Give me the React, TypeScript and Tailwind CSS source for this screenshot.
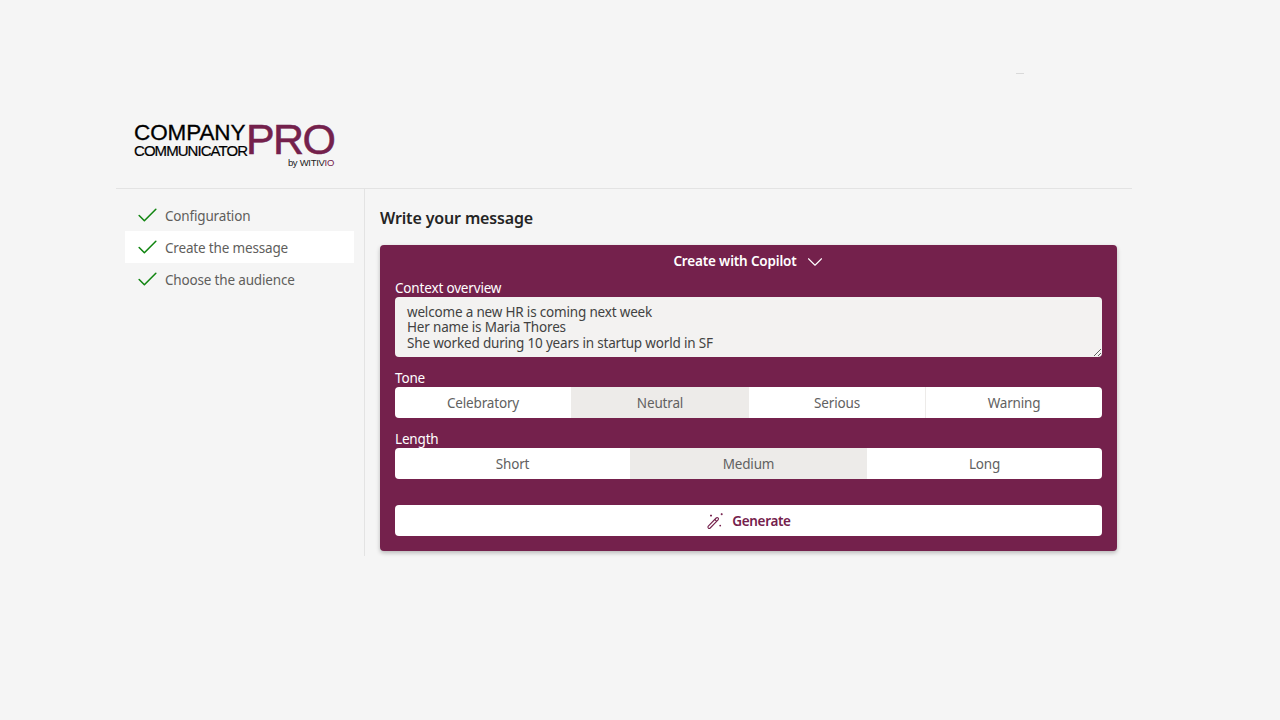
import { Check, ChevronDown } from "lucide-react";

const steps = ["Configuration", "Create the message", "Choose the audience"];

function Logo() {
  return (
    <div className="flex h-[50px] w-[202px] items-start font-['Liberation_Sans',Arial,sans-serif]">
      <div className="flex w-[112px] flex-col pt-[4px] text-black">
        <span className="whitespace-nowrap text-[22.5px] leading-[18px] tracking-[-0.1px] [-webkit-text-stroke:0.3px_#000]">COMPANY</span>
        <span className="mt-[2px] whitespace-nowrap text-[15px] leading-[14px] tracking-[-0.95px] [-webkit-text-stroke:0.2px_#000]">COMMUNICATOR</span>
      </div>
      <div className="flex w-[88px] flex-col items-end text-[#74214c]">
        <span className="w-full text-[43px] leading-[38px] tracking-[-1.6px] [-webkit-text-stroke:0.5px_#74214c]">PRO</span>
        <span className="mt-[1px] whitespace-nowrap text-[9.5px] leading-[8px] tracking-[-0.3px] text-[#222]">
          by WITIV<span className="text-[#74214c]">IO</span>
        </span>
      </div>
    </div>
  );
}

function WandIcon() {
  return (
    <svg viewBox="0 0 18 18" className="h-[18px] w-[18px]" fill="none" stroke="#74214c" strokeWidth="1.1">
      <path d="M2.3 14.2 10.2 6a1.3 1.3 0 0 1 1.9 1.8L4.2 16a1.3 1.3 0 0 1-1.9-1.8Z" />
      <path d="M8.8 7.5 10.7 9.4" />
      <path d="M5 2.6v2M4 3.6h2M15.7 1.2v2M14.7 2.2h2" strokeWidth="1" />
      <circle cx="14.2" cy="13.6" r="0.9" fill="#74214c" stroke="none" />
    </svg>
  );
}

function Segments({ items, active }: { items: string[]; active: string }) {
  return (
    <div className="flex h-[31px] overflow-hidden rounded-[4px] bg-white">
      {items.map((item, i) => (
        <div
          key={item}
          className={`flex flex-1 items-center justify-center pt-[2px] text-[13.5px] tracking-[-0.17px] text-[#616161] ${
            item === active ? "bg-[#edebe9]" : ""
          } ${i > 0 ? "border-l border-[#edebe9]" : ""}`}
        >
          {item}
        </div>
      ))}
    </div>
  );
}

export default function App() {
  return (
    <div className="relative h-screen bg-[#f5f5f5] pl-[116px] pt-[120px] font-['Noto_Sans','Open_Sans',sans-serif]">
      <div className="absolute left-[1016px] top-[73px] h-px w-[8px] bg-[#d9d9d9]" />
      <div className="w-[1016px]">
        <header className="h-[69px] border-b border-[#e3e3e3] pl-[18px]">
          <Logo />
        </header>
        <div className="flex">
          <nav className="h-[367px] w-[249px] border-r border-[#e3e3e3] pl-[9px] pr-[10px] pt-[10px]">
            {steps.map((step, i) => (
              <div
                key={step}
                className={`flex h-[32px] items-center pl-[10px] ${i === 1 ? "bg-white" : ""}`}
              >
                <Check className="h-[25px] w-[25px] text-[#108510]" strokeWidth={1.5} />
                <span className="ml-[5px] pt-[2px] text-[13.5px] tracking-[-0.17px] text-[#605e5c]">{step}</span>
              </div>
            ))}
          </nav>
          <main className="w-[737px] pl-[15px] box-content">
            <h1 className="mt-[18px] h-[22px] text-[16px] font-semibold leading-[22px] tracking-[-0.15px] text-[#242424]">
              Write your message
            </h1>
            <section className="mt-[16px] h-[306px] rounded-[4px] bg-[#74214c] px-[15px] text-white shadow-[0_2px_4px_rgba(0,0,0,0.25)]">
              <div className="flex h-[33px] items-center justify-center gap-[5px] pl-[4px] text-[13.5px] font-semibold tracking-[-0.17px]">
                Create with Copilot
                <ChevronDown className="h-[26px] w-[26px]" strokeWidth={1} />
              </div>
              <div className="h-[19px] pt-[1px] text-[13.5px] leading-[19px] tracking-[-0.17px]">Context overview</div>
              <textarea
                readOnly
                className="block h-[60px] w-full resize-y rounded-[4px] bg-[#f3f2f1] px-[12px] pt-[8px] text-[13.5px] leading-[15.4px] tracking-[-0.18px] text-[#424242] outline-none"
                value={"welcome a new HR is coming next week\nHer name is Maria Thores\nShe worked during 10 years in startup world in SF"}
              />
              <div className="mt-[11px] h-[19px] pt-[1px] text-[13.5px] leading-[19px] tracking-[-0.17px]">Tone</div>
              <Segments items={["Celebratory", "Neutral", "Serious", "Warning"]} active="Neutral" />
              <div className="mt-[11px] h-[19px] pt-[1px] text-[13.5px] leading-[19px] tracking-[-0.17px]">Length</div>
              <Segments items={["Short", "Medium", "Long"]} active="Medium" />
              <button className="mt-[26px] flex h-[31px] w-full items-center justify-center gap-[8px] rounded-[4px] bg-white text-[13.5px] font-semibold tracking-[-0.35px] text-[#74214c]">
                <WandIcon />
                <span className="pt-[2px]">Generate</span>
              </button>
            </section>
          </main>
        </div>
      </div>
    </div>
  );
}
